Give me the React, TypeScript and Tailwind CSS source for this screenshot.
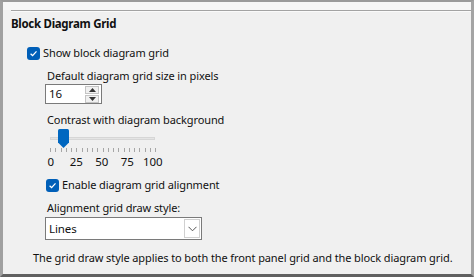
import React, { useState } from 'react';

const font = { fontFamily: '"Noto Sans", "Open Sans", sans-serif' };

function Check({ checked, onClick }: { checked: boolean; onClick: () => void }) {
  return (
    <button
      type="button"
      onClick={onClick}
      className={`w-[13px] h-[13px] rounded-[3px] flex items-center justify-center shrink-0 ${
        checked ? 'bg-[#005fb8]' : 'bg-white border border-[#868686]'
      }`}
    >
      {checked && (
        <svg width="9" height="9" viewBox="0 0 9 9">
          <path d="M1.6 4.7 L3.6 6.6 L7.5 2.4" fill="none" stroke="white" strokeWidth="1.3" />
        </svg>
      )}
    </button>
  );
}

export default function App() {
  const [showGrid, setShowGrid] = useState(true);
  const [align, setAlign] = useState(true);
  const [size, setSize] = useState(16);
  const ticks = Array.from({ length: 21 }, (_, i) => i);

  return (
    <div
      className="w-[474px] h-[277px] bg-[#f0f0f0] border-t-2 border-l-[3px] border-r-[3px] border-b-[3px] border-t-[#9a9a9a] border-l-[#a0a0a0] border-r-[#a4a4a4] border-b-[#606060] text-[11px] tracking-[-0.1px] text-[#111] overflow-hidden"
      style={font}
    >
      <div className="h-[8px] bg-[#f6f6f6]" />
      <div className="ml-[8px] border-t border-[#a3a3a3] border-b border-b-[#fafafa]" />

      <div className="pl-[8px]">
        <div className="mt-[3px] h-[18px] leading-[18px] text-[11.5px] tracking-[-0.3px] font-bold">Block Diagram Grid</div>

        {/* show grid */}
        <div className="mt-[12px] h-[16px] ml-[16px] flex items-center gap-[3px]">
          <Check checked={showGrid} onClick={() => setShowGrid(!showGrid)} />
          <span className="leading-[16px]">Show block diagram grid</span>
        </div>

        <div className="ml-[36px]">
          <div className="mt-[7px] h-[16px] leading-[16px]">Default diagram grid size in pixels</div>

          {/* numeric */}
          <div className="ml-[-2px] w-[57px] h-[20px] bg-white border border-[#7a7a7a] flex items-center">
            <span className="pl-[3px] flex-1 leading-[16px] text-[11.5px]">{size}</span>
            <div className="w-[14px] h-[17px] mr-[2px] flex flex-col gap-[1px]">
              <button
                type="button"
                onClick={() => setSize(size + 1)}
                className="h-[8px] border border-[#c4c4c4] bg-[#f0f0f0] flex items-center justify-center"
              >
                <svg width="7" height="4" viewBox="0 0 7 4"><path d="M0 4 L3.5 0 L7 4Z" fill="#333" /></svg>
              </button>
              <button
                type="button"
                onClick={() => setSize(Math.max(1, size - 1))}
                className="h-[8px] border border-[#c4c4c4] bg-[#f0f0f0] flex items-center justify-center"
              >
                <svg width="7" height="4" viewBox="0 0 7 4"><path d="M0 0 L3.5 4 L7 0Z" fill="#333" /></svg>
              </button>
            </div>
          </div>

          <div className="mt-[8px] h-[16px] leading-[16px]">Contrast with diagram background</div>

          {/* slider */}
          <div className="relative h-[26px] w-[120px]">
            <div className="absolute left-[3px] top-[9px] w-[105px] h-[3px] bg-[#e4e4e4] border border-[#d6d6d6]" />
            <svg className="absolute left-[11px] top-[1px]" width="11" height="19" viewBox="0 0 11 19">
              <path d="M1.5 0 H9.5 Q11 0 11 1.5 V13.5 L5.5 19 L0 13.5 V1.5 Q0 0 1.5 0Z" fill="#0067c0" />
            </svg>
            <div className="absolute left-[3px] top-[20px] w-[106px] h-[4px] flex justify-between">
              {ticks.map((t) => (
                <div key={t} className="w-px h-[4px] bg-[#a6a6a6]" />
              ))}
            </div>
          </div>
          <div className="h-[16px] leading-[16px] flex ml-[-9px] text-[11.5px] tracking-normal">
            {['0', '25', '50', '75', '100'].map((l) => (
              <span key={l} className="w-[25.5px] text-center">{l}</span>
            ))}
          </div>
        </div>

        {/* alignment */}
        <div className="mt-[7px] h-[16px] ml-[35px] flex items-center gap-[3px]">
          <Check checked={align} onClick={() => setAlign(!align)} />
          <span className="leading-[16px]">Enable diagram grid alignment</span>
        </div>

        <div className="ml-[36px]">
          <div className="mt-[7px] h-[16px] leading-[16px]">Alignment grid draw style:</div>
          <div className="mt-[1px] ml-[-2px] w-[157px] h-[23px] bg-white border border-[#7a7a7a] flex items-center">
            <span className="pl-[3px] flex-1 leading-[16px] text-[11.5px]">Lines</span>
            <div className="w-[16px] h-[19px] mr-[1px] border border-[#d0d0d0] flex items-center justify-center">
              <svg width="9" height="6" viewBox="0 0 9 6">
                <path d="M0.5 0.8 L4.5 4.8 L8.5 0.8" fill="none" stroke="#555" strokeWidth="1" />
              </svg>
            </div>
          </div>
        </div>

        <div className="mt-[10px] ml-[22px] h-[16px] leading-[16px] whitespace-nowrap">
          The grid draw style applies to both the front panel grid and the block diagram grid.
        </div>
      </div>
    </div>
  );
}
